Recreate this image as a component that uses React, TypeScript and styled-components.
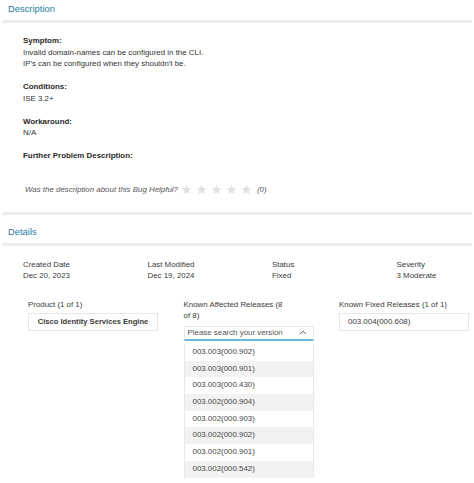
import styled, { createGlobalStyle } from "styled-components";

const GlobalStyle = createGlobalStyle`
  html, body {
    margin: 0;
    padding: 0;
    background: #ffffff;
    overflow: hidden;
  }
  body {
    font-family: "Liberation Sans", Arial, sans-serif;
    font-size: 7.9px;
    line-height: 11.5px;
    color: #333333;
  }
`;

const Section = styled.section<{ $top?: number }>`
  margin: ${(p) => p.$top ?? 0}px 2px 0 2px;
`;

const SectionTitle = styled.h2`
  margin: 0;
  height: 20px;
  line-height: 18px;
  padding-left: 6px;
  font-size: 9.4px;
  font-weight: 400;
  color: #1d7ca3;
  border-bottom: 3px solid #ededed;
`;

const DescBody = styled.div`
  padding: 12px 0 16.5px 21px;
  border-bottom: 3px solid #ededed;
`;

const Block = styled.div`
  margin-bottom: 11.5px;
`;

const Label = styled.div`
  font-weight: 700;
  color: #2a2a2a;
`;

const Helpful = styled.div`
  margin-top: 22px;
  height: 11.5px;
  display: flex;
  align-items: center;
  padding-left: 2px;
  font-style: italic;
  color: #555555;
`;

const Stars = styled.div`
  display: flex;
  gap: 4px;
  margin: 0 5px 0 3px;
`;

const Count = styled.span`
  font-style: italic;
  color: #555555;
`;

const InfoGrid = styled.div`
  display: grid;
  grid-template-columns: repeat(3, 124.5px) auto;
  padding: 13px 0 0 21px;
  color: #3a3a3a;
`;

const ReleaseRow = styled.div`
  display: grid;
  grid-template-columns: repeat(3, 130px);
  column-gap: 25.5px;
  padding: 17px 0 0 26px;
  align-items: start;
`;

const FieldLabel = styled.div<{ $nowrap?: boolean }>`
  max-width: 104px;
  white-space: ${(p) => (p.$nowrap ? "nowrap" : "normal")};
  color: #3a3a3a;
`;

const ValueBox = styled.div<{ $bold?: boolean }>`
  margin-top: 3px;
  height: 18px;
  box-sizing: border-box;
  border: 1px solid #e6e6e6;
  padding: 0 8px;
  display: flex;
  align-items: center;
  justify-content: ${(p) => (p.$bold ? "center" : "flex-start")};
  white-space: nowrap;
  overflow: hidden;
  font-weight: ${(p) => (p.$bold ? 700 : 400)};
  font-size: ${(p) => (p.$bold ? "7.6px" : "7.9px")};
  color: #3a3a3a;
`;

const SearchBox = styled.div`
  margin-top: 4px;
  height: 15px;
  box-sizing: border-box;
  border: 1px solid #e8e8e8;
  border-bottom: 2px solid #6cbad9;
  padding: 0 6px 0 3px;
  display: flex;
  align-items: center;
  justify-content: space-between;
  color: #555555;
`;

const List = styled.ul`
  list-style: none;
  margin: 3.5px 0 0 0;
  padding: 0;
  border-left: 1px solid #e8e8e8;
  border-right: 1px solid #e8e8e8;
`;

const Item = styled.li<{ $alt: boolean }>`
  height: 16.7px;
  line-height: 16.7px;
  padding-left: 8px;
  background: ${(p) => (p.$alt ? "#f2f2f2" : "#ffffff")};
  color: #444444;
`;

const Star = () => (
  <svg width="11" height="11" viewBox="0 0 24 24">
    <path
      d="M12 1.8l3.1 6.9 7.5.7-5.7 5 1.7 7.4L12 17.9l-6.6 3.9 1.7-7.4-5.7-5 7.5-.7z"
      fill="#e2e2e2"
    />
  </svg>
);

const Chevron = () => (
  <svg width="8" height="5" viewBox="0 0 8 5">
    <path d="M0.8 4.2L4 1.2l3.2 3" fill="none" stroke="#666" strokeWidth="1" />
  </svg>
);

const releases = [
  "003.003(000.902)",
  "003.003(000.901)",
  "003.003(000.430)",
  "003.002(000.904)",
  "003.002(000.903)",
  "003.002(000.902)",
  "003.002(000.901)",
  "003.002(000.542)",
];

const info = [
  ["Created Date", "Dec 20, 2023"],
  ["Last Modified", "Dec 19, 2024"],
  ["Status", "Fixed"],
  ["Severity", "3 Moderate"],
];

export default function App() {
  return (
    <>
      <GlobalStyle />
      <Section>
        <SectionTitle>Description</SectionTitle>
        <DescBody>
          <Block>
            <Label>Symptom:</Label>
            <div>Invalid domain-names can be configured in the CLI.</div>
            <div>IP's can be configured when they shouldn't be.</div>
          </Block>
          <Block>
            <Label>Conditions:</Label>
            <div>ISE 3.2+</div>
          </Block>
          <Block>
            <Label>Workaround:</Label>
            <div>N/A</div>
          </Block>
          <Block>
            <Label>Further Problem Description:</Label>
          </Block>
          <Helpful>
            Was the description about this Bug Helpful?
            <Stars>
              {[0, 1, 2, 3, 4].map((i) => (
                <Star key={i} />
              ))}
            </Stars>
            <Count>(0)</Count>
          </Helpful>
        </DescBody>
      </Section>
      <Section $top={8}>
        <SectionTitle>Details</SectionTitle>
        <InfoGrid>
          {info.map(([k, v]) => (
            <div key={k}>
              <div>{k}</div>
              <div>{v}</div>
            </div>
          ))}
        </InfoGrid>
        <ReleaseRow>
          <div>
            <FieldLabel $nowrap>Product (1 of 1)</FieldLabel>
            <ValueBox $bold>Cisco Identity Services Engine</ValueBox>
          </div>
          <div>
            <FieldLabel>Known Affected Releases (8 of 8)</FieldLabel>
            <SearchBox>
              <span>Please search your version</span>
              <Chevron />
            </SearchBox>
            <List>
              {releases.map((r, i) => (
                <Item key={i} $alt={i % 2 === 1}>
                  {r}
                </Item>
              ))}
            </List>
          </div>
          <div>
            <FieldLabel $nowrap>Known Fixed Releases (1 of 1)</FieldLabel>
            <ValueBox>003.004(000.608)</ValueBox>
          </div>
        </ReleaseRow>
      </Section>
    </>
  );
}
